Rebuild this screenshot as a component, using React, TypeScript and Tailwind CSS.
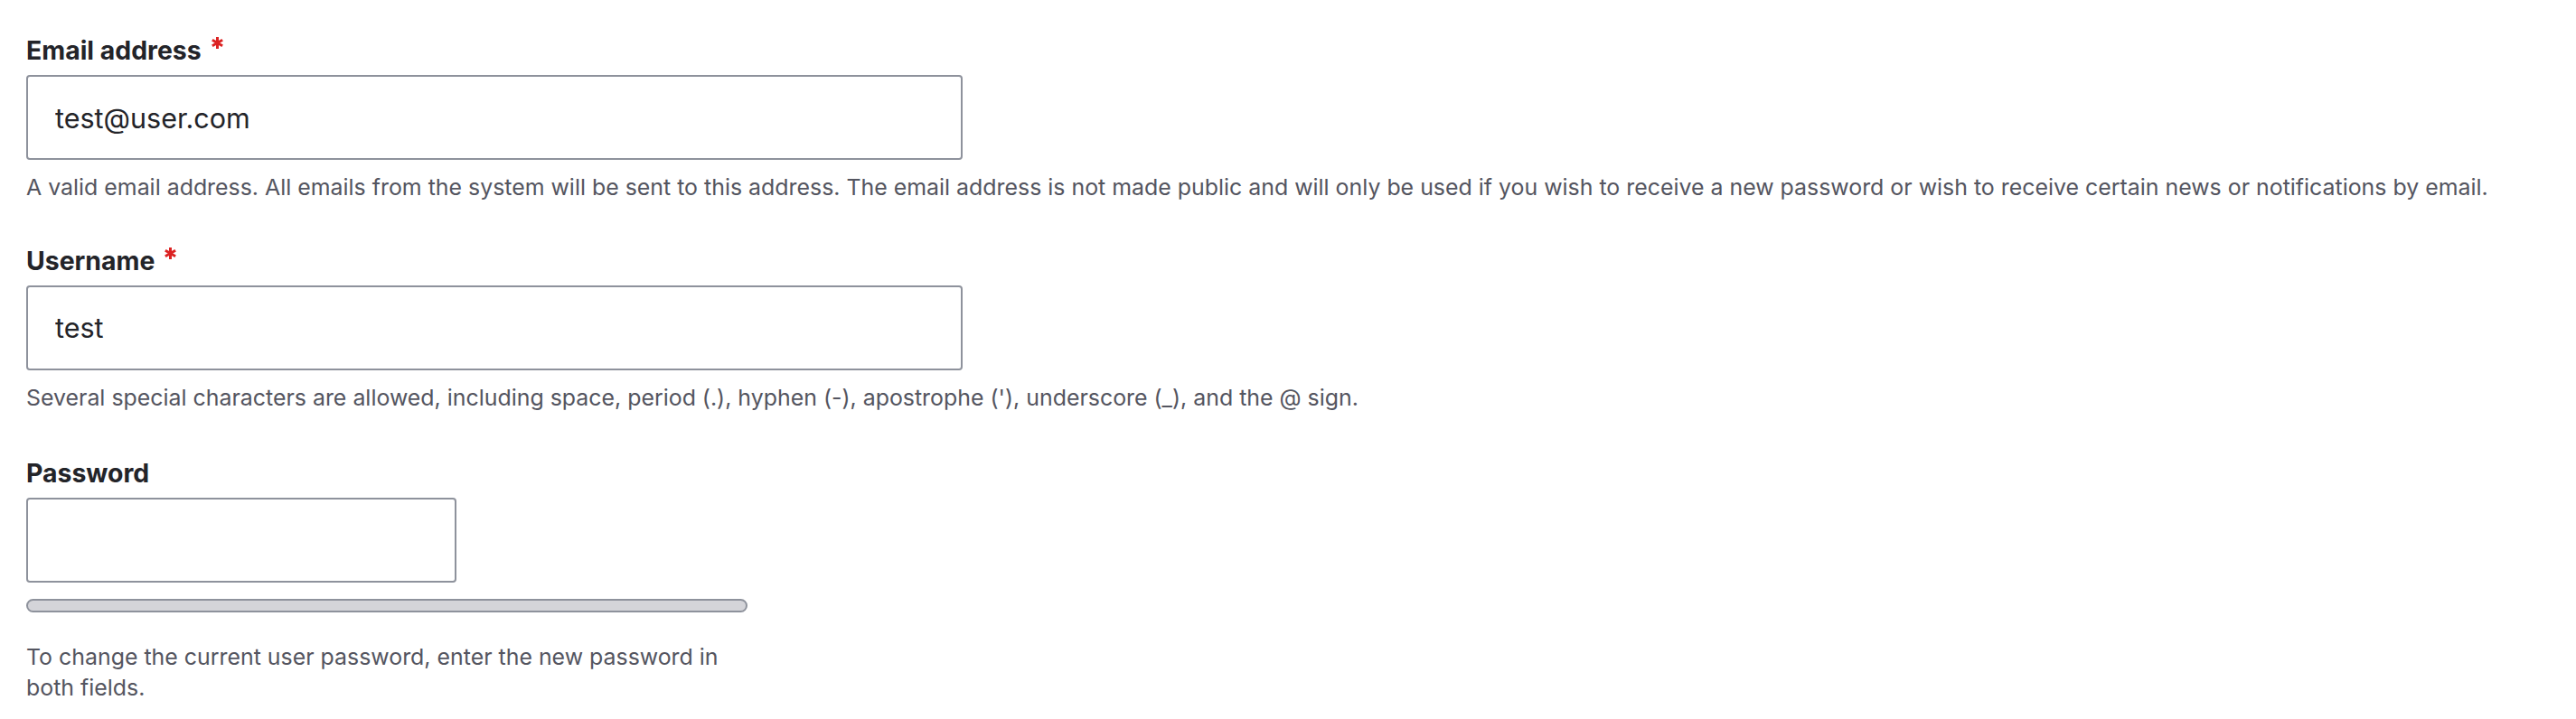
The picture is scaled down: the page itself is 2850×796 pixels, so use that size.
import React from "react";

function Asterisk() {
  return (
    <svg
      className="ml-[11px] inline-block align-top mt-[2px]"
      width="13"
      height="13"
      viewBox="0 0 14 14"
      aria-hidden="true"
    >
      <g stroke="#dc2323" strokeWidth="3.2" strokeLinecap="butt">
        <line x1="7" y1="0" x2="7" y2="14" />
        <line x1="0.94" y1="3.5" x2="13.06" y2="10.5" />
        <line x1="0.94" y1="10.5" x2="13.06" y2="3.5" />
      </g>
    </svg>
  );
}

function Label({ children, required }: { children: React.ReactNode; required?: boolean }) {
  return (
    <label className="block text-[28.4px] font-bold leading-[34px] text-[#232429]">
      {children}
      {required && <Asterisk />}
    </label>
  );
}

export default function App() {
  return (
    <div className="min-h-screen bg-white pl-[29px] pt-[39px] font-['Inter','Noto_Sans',sans-serif] antialiased">
      {/* Email */}
      <div className="mb-[47px]">
        <Label required>Email address</Label>
        <input
          type="email"
          defaultValue="test@user.com"
          className="mt-[10px] block h-[94px] w-[1036px] rounded-[4px] border-2 border-[#8e929c] bg-white px-[30px] text-[30.5px] text-[#232429] outline-none"
        />
        <p className="mt-[14px] text-[24.9px] leading-[33.5px] text-[#545560]">
          A valid email address. All emails from the system will be sent to this address. The email address is not made public and will only be used if you wish to receive a new password or wish to receive certain news or notifications by email.
        </p>
      </div>

      {/* Username */}
      <div className="mb-[50px]">
        <Label required>Username</Label>
        <input
          type="text"
          defaultValue="test"
          className="mt-[10px] block h-[94px] w-[1036px] rounded-[4px] border-2 border-[#8e929c] bg-white px-[30px] text-[30.5px] text-[#232429] outline-none"
        />
        <p className="mt-[14px] text-[24.9px] leading-[33.5px] text-[#545560]">
          Several special characters are allowed, including space, period (.), hyphen (-), apostrophe ('), underscore (_), and the @ sign.
        </p>
      </div>

      {/* Password */}
      <div>
        <Label>Password</Label>
        <input
          type="password"
          className="mt-[10px] block h-[94px] w-[476px] rounded-[4px] border-2 border-[#8e929c] bg-white px-[30px] text-[30.5px] text-[#232429] outline-none"
        />
        <div className="mt-[18px] h-[15px] w-[798px] rounded-full border-2 border-[#8e929c] bg-[#d4d4d9]" />
        <p className="mt-[33px] w-[798px] text-[24.9px] leading-[33.5px] text-[#545560]">
          To change the current user password, enter the new password in both fields.
        </p>
      </div>
    </div>
  );
}
